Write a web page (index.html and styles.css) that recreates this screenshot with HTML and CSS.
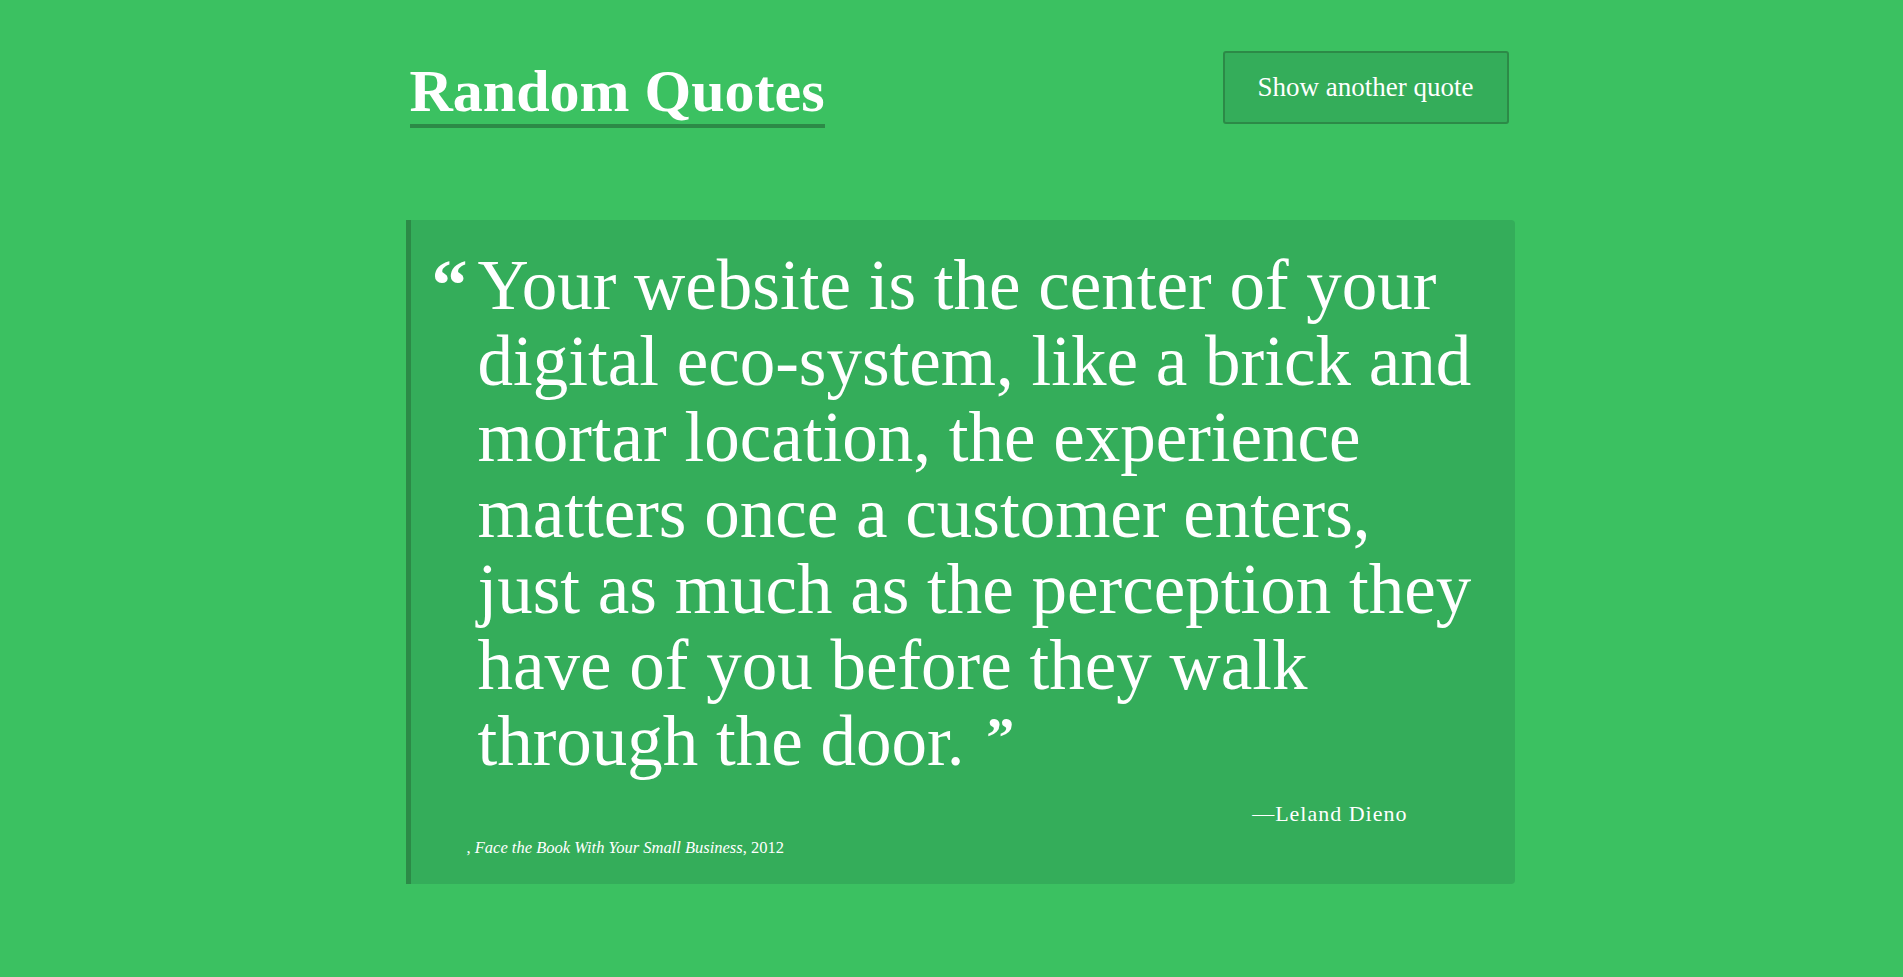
FILE: index.html
```html
<!DOCTYPE html>
<html lang="en">
<head>
<meta charset="utf-8">
<title>Random Quotes</title>
<link rel="stylesheet" href="styles.css">
</head>
<body>
<div class="container">
  <header class="header">
    <h1 class="title">Random Quotes</h1>
    <button class="btn" type="button">Show another quote</button>
  </header>
  <section class="quote-box">
    <div class="quote">
      <span class="mark-open">&ldquo;</span>
      <p class="quote-text">Your website is the center of your<br>digital eco-system, like a brick and<br>mortar location, the experience<br>matters once a customer enters,<br>just as much as the perception they<br>have of you before they walk<br>through the door. <span class="mark-close">&rdquo;</span></p>
    </div>
    <p class="cite">&mdash;Leland Dieno</p>
    <p class="source">, <em>Face the Book With Your Small Business</em>, 2012</p>
  </section>
</div>
</body>
</html>
```
FILE: styles.css
```css
html, body {
  margin: 0;
  padding: 0;
}
body {
  background: #3bc161;
  color: #ffffff;
  font-family: "Liberation Serif", "Times New Roman", serif;
  min-height: 977px;
}
.container {
  width: 1109px;
  margin-left: calc(50% - 546px);
}
.header {
  display: flex;
  justify-content: space-between;
  align-items: flex-start;
  padding: 51px 6px 0 4px;
}
.title {
  margin: 7px 0 0 0;
  font-size: 60px;
  line-height: 66px;
  font-weight: 700;
  border-bottom: 4px solid #2c8a47;
}
.btn {
  width: 286px;
  height: 73px;
  background: #34ad5a;
  border: 2px solid #2c8a47;
  border-radius: 3px;
  color: #ffffff;
  font-family: "Liberation Serif", "Times New Roman", serif;
  font-size: 27px;
  padding: 0;
}
.quote-box {
  margin-top: 92px;
  background: #34ad5a;
  border-left: 5px solid #2c8a47;
  border-radius: 0 4px 4px 0;
  padding: 27px 0 26px 21px;
}
.quote {
  display: flex;
  align-items: flex-start;
}
.mark-open {
  width: 46px;
  flex: none;
  font-size: 72px;
  line-height: 76px;
  font-weight: 700;
}
.quote-text {
  margin: 0;
  font-size: 71px;
  line-height: 76px;
  white-space: nowrap;
}
.mark-close {
  margin-left: 4px;
  font-size: 56px;
  font-weight: 700;
  vertical-align: 8px;
  line-height: 0;
}
.cite {
  margin: 22px 0 0 0;
  padding-right: 107px;
  text-align: right;
  font-size: 22px;
  line-height: 26px;
  letter-spacing: 1px;
}
.source {
  margin: 11px 0 0 35px;
  font-size: 16.5px;
  line-height: 20px;
}
```
